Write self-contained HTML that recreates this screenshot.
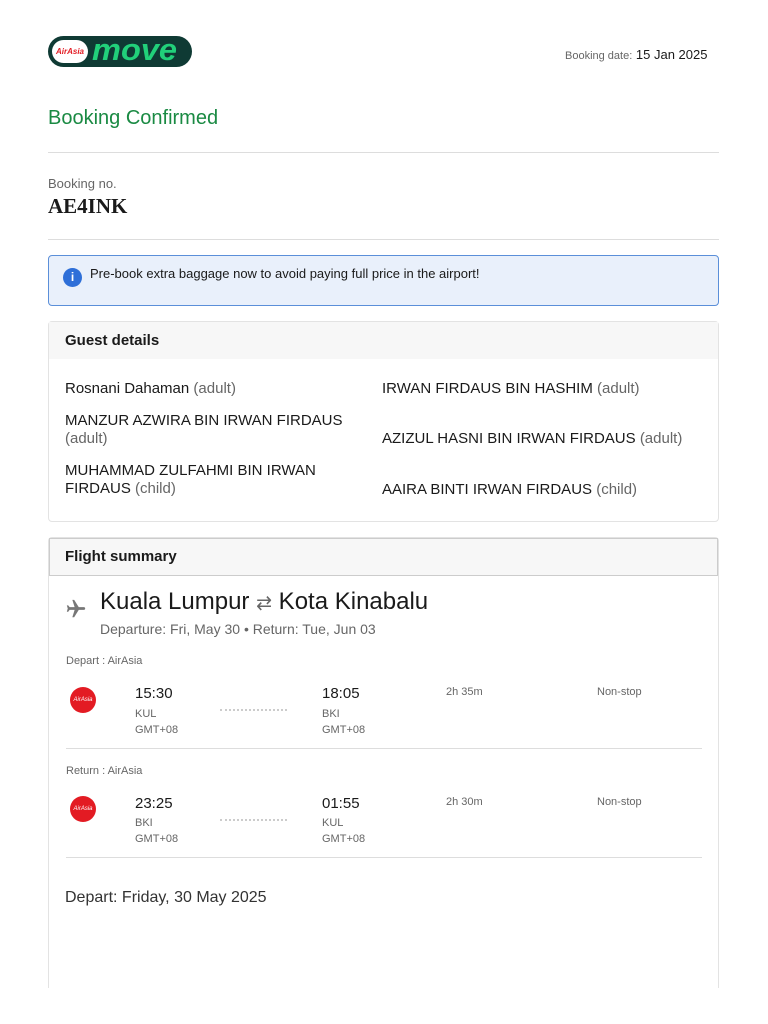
<!DOCTYPE html>
<html><head><meta charset="utf-8"><style>
*{margin:0;padding:0;box-sizing:border-box}
html,body{width:768px;height:1024px;overflow:hidden}
body{background:#fff;font-family:"Liberation Sans",sans-serif;color:#1a1a1a;position:relative}
.a{position:absolute}
.g{color:#666}
</style></head><body>
<div class="a" style="left:48px;top:36px;width:144px;height:31px;background:#0f3a34;border-radius:16px"></div>
<div class="a" style="left:52px;top:40px;width:36px;height:23px;background:#fff;border-radius:12px;color:#e31b23;font-size:8px;font-style:italic;font-weight:bold;text-align:center;line-height:23px">AirAsia</div>
<div class="a" style="left:92px;top:32px;color:#21d07a;font-size:31px;font-style:italic;font-weight:bold;transform:scaleX(1.05);transform-origin:left">move</div>
<div class="a" style="left:565px;top:47px;font-size:13px;white-space:nowrap"><span class="g" style="font-size:11px">Booking date:</span> 15 Jan 2025</div>
<div class="a" style="left:48px;top:107px;font-size:20px;color:#1a8a43">Booking Confirmed</div>
<div class="a" style="left:48px;top:152px;width:671px;height:1px;background:#ddd"></div>
<div class="a g" style="left:48px;top:176px;font-size:13px">Booking no.</div>
<div class="a" style="left:48px;top:194px;font-size:21px;font-weight:bold;font-family:'Liberation Serif',serif">AE4INK</div>
<div class="a" style="left:48px;top:239px;width:671px;height:1px;background:#ddd"></div>
<div class="a" style="left:48px;top:255px;width:671px;height:51px;background:#e9f0fb;border:1px solid #5b8fd9;border-radius:4px"></div>
<div class="a" style="left:63px;top:268px;width:19px;height:19px;border-radius:50%;background:#2e6fd8;color:#fff;font-size:12px;font-weight:bold;text-align:center;line-height:19px">i</div>
<div class="a" style="left:90px;top:266px;font-size:13px">Pre-book extra baggage now to avoid paying full price in the airport!</div>
<div class="a" style="left:48px;top:321px;width:671px;height:201px;border:1px solid #e3e3e3;border-radius:4px"></div>
<div class="a" style="left:49px;top:322px;width:669px;height:37px;background:#f7f7f7"></div>
<div class="a" style="left:65px;top:332px;font-size:15px;font-weight:bold">Guest details</div>
<div class="a" style="left:65px;top:380px;font-size:15px;line-height:18px;width:300px">Rosnani Dahaman <span class="g">(adult)</span></div>
<div class="a" style="left:382px;top:380px;font-size:15px">IRWAN FIRDAUS BIN HASHIM <span class="g">(adult)</span></div>
<div class="a" style="left:65px;top:412px;font-size:15px;line-height:18px;width:300px">MANZUR AZWIRA BIN IRWAN FIRDAUS <span class="g">(adult)</span></div>
<div class="a" style="left:382px;top:430px;font-size:15px">AZIZUL HASNI BIN IRWAN FIRDAUS <span class="g">(adult)</span></div>
<div class="a" style="left:65px;top:462px;font-size:15px;line-height:18px;width:300px">MUHAMMAD ZULFAHMI BIN IRWAN FIRDAUS <span class="g">(child)</span></div>
<div class="a" style="left:382px;top:481px;font-size:15px">AAIRA BINTI IRWAN FIRDAUS <span class="g">(child)</span></div>
<div class="a" style="left:48px;top:537px;width:671px;height:451px;border:1px solid #e3e3e3;border-bottom:none;border-radius:4px 4px 0 0"></div>
<div class="a" style="left:49px;top:538px;width:669px;height:38px;background:#f7f7f7;border:1px solid #ccc"></div>
<div class="a" style="left:65px;top:548px;font-size:15px;font-weight:bold">Flight summary</div>
<svg class="a" style="left:65px;top:598px" width="22" height="22" viewBox="0 0 24 24"><path fill="#777" d="M21 16v-2l-8-5V3.5a1.5 1.5 0 0 0-3 0V9l-8 5v2l8-2.5V19l-2 1.5V22l3.5-1 3.5 1v-1.5L13 19v-5.5z" transform="rotate(90 12 12)"/></svg>
<div class="a" style="left:100px;top:588px;font-size:24px;white-space:nowrap">Kuala Lumpur <span class="g" style="font-size:19px">⇄</span> Kota Kinabalu</div>
<div class="a g" style="left:100px;top:621px;font-size:14px">Departure: Fri, May 30 • Return: Tue, Jun 03</div>
<div class="a g" style="left:66px;top:655px;font-size:11px">Depart : AirAsia</div>
<div class="a" style="left:70px;top:687px;width:26px;height:26px;border-radius:50%;background:#e31b23;color:#fff;font-size:6px;font-style:italic;text-align:center;line-height:26px">AirAsia</div>
<div class="a" style="left:135px;top:685px;font-size:15px">15:30</div>
<div class="a g" style="left:135px;top:706px;font-size:11px;line-height:16px">KUL<br>GMT+08</div>
<div class="a" style="left:220px;top:709px;width:67px;border-top:2px dotted #ccc"></div>
<div class="a" style="left:322px;top:685px;font-size:15px">18:05</div>
<div class="a g" style="left:322px;top:706px;font-size:11px;line-height:16px">BKI<br>GMT+08</div>
<div class="a g" style="left:446px;top:686px;font-size:11px">2h 35m</div>
<div class="a g" style="left:597px;top:686px;font-size:11px">Non-stop</div>
<div class="a" style="left:66px;top:748px;width:636px;height:1px;background:#ddd"></div>
<div class="a g" style="left:66px;top:765px;font-size:11px">Return : AirAsia</div>
<div class="a" style="left:70px;top:796px;width:26px;height:26px;border-radius:50%;background:#e31b23;color:#fff;font-size:6px;font-style:italic;text-align:center;line-height:26px">AirAsia</div>
<div class="a" style="left:135px;top:795px;font-size:15px">23:25</div>
<div class="a g" style="left:135px;top:815px;font-size:11px;line-height:16px">BKI<br>GMT+08</div>
<div class="a" style="left:220px;top:819px;width:67px;border-top:2px dotted #ccc"></div>
<div class="a" style="left:322px;top:795px;font-size:15px">01:55</div>
<div class="a g" style="left:322px;top:815px;font-size:11px;line-height:16px">KUL<br>GMT+08</div>
<div class="a g" style="left:446px;top:796px;font-size:11px">2h 30m</div>
<div class="a g" style="left:597px;top:796px;font-size:11px">Non-stop</div>
<div class="a" style="left:66px;top:857px;width:636px;height:1px;background:#ddd"></div>
<div class="a" style="left:65px;top:889px;font-size:16px;color:#333">Depart: Friday, 30 May 2025</div>
</body></html>
